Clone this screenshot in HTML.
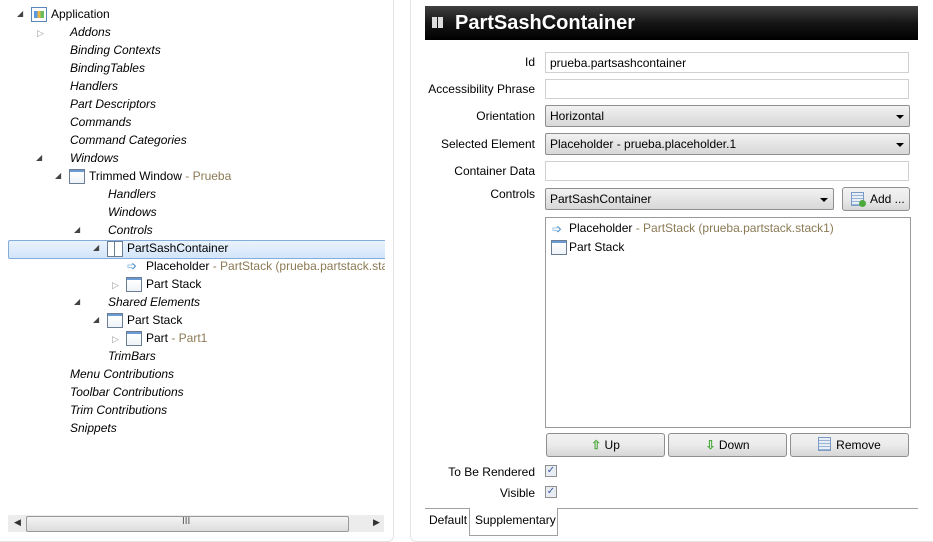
<!DOCTYPE html>
<html><head><style>
body{margin:0;width:933px;height:535px;background:#fff;font-family:"Liberation Sans",sans-serif;font-size:12px;color:#000;position:relative;overflow:hidden}
.a{position:absolute;white-space:nowrap}
.r{position:absolute;height:18px;line-height:18px;white-space:nowrap}
i{font-style:italic}
.g{color:#8c7a55}
.tri{position:absolute;font-size:8px;color:#444}
.tro{position:absolute;font-size:9px;color:#999}
.ic{position:absolute;width:14px;height:13px;border:1px solid #6a7d93;background:linear-gradient(#6a9bd4 0,#6a9bd4 2px,#fff 2px,#eef3f8)}
.lab{position:absolute;right:398px;text-align:right;white-space:nowrap}
.inp{position:absolute;left:545px;width:364px;height:20px;border:1px solid #d0d0d0;background:#fff;line-height:20px;padding-left:4px;box-sizing:border-box}
.cmb{position:absolute;left:545px;height:22px;border:1px solid #8e8f8f;border-radius:2px;background:linear-gradient(#f2f2f2,#e4e4e4 50%,#d8d8d8);line-height:20px;padding-left:4px;box-sizing:border-box}
.cmb:after{content:"";position:absolute;right:5px;top:9px;border:4px solid transparent;border-top:4px solid #000;border-bottom:0}
.btn{position:absolute;height:24px;border:1px solid #8e8f8f;border-radius:3px;background:linear-gradient(#f2f2f2,#ebebeb 50%,#d6d6d6);box-sizing:border-box;text-align:center;line-height:22px}
.cb{position:absolute;left:545px;width:12px;height:12px;border:1px solid #8e8f8f;background:#e8ecf3;box-sizing:border-box;font-size:10px;line-height:10px;text-align:center;color:#3b5a9a}
#tree{position:absolute;left:0;top:0;width:385px;height:510px;overflow:hidden}
</style></head><body>
<div class="a" style="left:-5px;top:-5px;width:397px;height:545px;border:1px solid #e4e4e4;border-radius:6px"></div>
<div class="a" style="left:410px;top:-5px;width:530px;height:545px;border:1px solid #e4e4e4;border-radius:6px"></div>

<div id="tree">
<div class="a" style="left:8px;top:240px;width:378px;height:17px;border:1px solid #84acdd;border-radius:2px;background:linear-gradient(#eaf3fd,#d3e5fa)"></div>

<span class="tri" style="left:17px;top:9px">◢</span>
<div class="a" style="left:31px;top:7px;width:14px;height:13px;border:1px solid #5b86b8;background:#fff"><div style="margin:3px 2px;height:7px;background:linear-gradient(90deg,#5a9be0 33%,#e6b64a 33%,#e6b64a 66%,#6bbf5a 66%)"></div></div>
<div class="r" style="left:51px;top:5px">Application</div>
<span class="tro" style="left:37px;top:28px">▷</span>
<div class="r" style="left:70px;top:23px"><i>Addons</i></div>
<div class="r" style="left:70px;top:41px"><i>Binding Contexts</i></div>
<div class="r" style="left:70px;top:59px"><i>BindingTables</i></div>
<div class="r" style="left:70px;top:77px"><i>Handlers</i></div>
<div class="r" style="left:70px;top:95px"><i>Part Descriptors</i></div>
<div class="r" style="left:70px;top:113px"><i>Commands</i></div>
<div class="r" style="left:70px;top:131px"><i>Command Categories</i></div>
<span class="tri" style="left:36px;top:153px">◢</span>
<div class="r" style="left:70px;top:149px"><i>Windows</i></div>
<span class="tri" style="left:55px;top:171px">◢</span>
<div class="ic" style="left:69px;top:169px"></div>
<div class="r" style="left:89px;top:167px">Trimmed Window <span class="g">- Prueba</span></div>
<div class="r" style="left:108px;top:185px"><i>Handlers</i></div>
<div class="r" style="left:108px;top:203px"><i>Windows</i></div>
<span class="tri" style="left:74px;top:225px">◢</span>
<div class="r" style="left:108px;top:221px"><i>Controls</i></div>
<span class="tri" style="left:93px;top:243px">◢</span>
<div class="a" style="left:107px;top:241px;width:14px;height:14px;border:1px solid #6a7d93;background:linear-gradient(90deg,#fff 6px,#6a7d93 6px,#6a7d93 7px,#fff 7px)"></div>
<div class="r" style="left:127px;top:239px">PartSashContainer</div>
<span class="a" style="left:127px;top:259px;color:#4a8fc8;font-size:12px">➩</span>
<div class="r" style="left:146px;top:257px">Placeholder <span class="g">- PartStack (prueba.partstack.stack1)</span></div>
<span class="tro" style="left:112px;top:280px">▷</span>
<div class="ic" style="left:126px;top:277px"></div>
<div class="r" style="left:146px;top:275px">Part Stack</div>
<span class="tri" style="left:74px;top:297px">◢</span>
<div class="r" style="left:108px;top:293px"><i>Shared Elements</i></div>
<span class="tri" style="left:93px;top:315px">◢</span>
<div class="ic" style="left:107px;top:313px"></div>
<div class="r" style="left:127px;top:311px">Part Stack</div>
<span class="tro" style="left:112px;top:334px">▷</span>
<div class="ic" style="left:126px;top:331px"></div>
<div class="r" style="left:146px;top:329px">Part <span class="g">- Part1</span></div>
<div class="r" style="left:108px;top:347px"><i>TrimBars</i></div>
<div class="r" style="left:70px;top:365px"><i>Menu Contributions</i></div>
<div class="r" style="left:70px;top:383px"><i>Toolbar Contributions</i></div>
<div class="r" style="left:70px;top:401px"><i>Trim Contributions</i></div>
<div class="r" style="left:70px;top:419px"><i>Snippets</i></div>
</div>

<div class="a" style="left:8px;top:515px;width:376px;height:17px;background:#ececec"></div>
<span class="a" style="left:14px;top:517px;font-size:9px;color:#333">◀</span>
<span class="a" style="left:373px;top:517px;font-size:9px;color:#333">▶</span>
<div class="a" style="left:26px;top:516px;width:321px;height:14px;border:1px solid #999;border-radius:2px;background:linear-gradient(#f4f4f4,#dcdcdc)"></div>
<span class="a" style="left:182px;top:516px;font-size:10px;color:#555">III</span>

<div class="a" style="left:425px;top:6px;width:493px;height:34px;background:linear-gradient(#404040,#151515 50%,#000)"></div>
<div class="a" style="left:432px;top:17px;width:5px;height:11px;background:#ddd"></div>
<div class="a" style="left:438px;top:17px;width:5px;height:11px;background:#ddd"></div>
<div class="a" style="left:455px;top:9px;color:#fff;font-size:20px;font-weight:bold;line-height:28px">PartSashContainer</div>

<div class="lab" style="top:55px">Id</div>
<div class="inp" style="top:52px;height:21px">prueba.partsashcontainer</div>
<div class="lab" style="top:82px">Accessibility Phrase</div>
<div class="inp" style="top:79px">&nbsp;</div>
<div class="lab" style="top:109px">Orientation</div>
<div class="cmb" style="top:105px;width:365px">Horizontal</div>
<div class="lab" style="top:137px">Selected Element</div>
<div class="cmb" style="top:133px;width:365px">Placeholder - prueba.placeholder.1</div>
<div class="lab" style="top:164px">Container Data</div>
<div class="inp" style="top:161px">&nbsp;</div>
<div class="lab" style="top:187px">Controls</div>
<div class="cmb" style="top:188px;width:289px">PartSashContainer</div>
<div class="btn" style="left:842px;top:187px;width:68px;text-align:left;padding-left:27px">Add ...</div>
<div class="a" style="left:851px;top:192px;width:11px;height:12px;border:1px solid #7a9bc5;background:repeating-linear-gradient(#e8eef6 0 2px,#9ab4d6 2px 3px)"></div>
<div class="a" style="left:859px;top:200px;width:7px;height:7px;border-radius:50%;background:#4caa3c"></div>

<div class="a" style="left:545px;top:217px;width:364px;height:209px;border:1px solid #9a9a9a;background:#fff"></div>
<span class="a" style="left:552px;top:222px;color:#4a8fc8">➩</span>
<div class="r" style="left:569px;top:219px">Placeholder <span class="g">- PartStack (prueba.partstack.stack1)</span></div>
<div class="ic" style="left:551px;top:240px"></div>
<div class="r" style="left:569px;top:238px">Part Stack</div>

<div class="btn" style="left:546px;top:433px;width:119px"><span style="color:#4caa3c;font-weight:bold">⇧</span> Up</div>
<div class="btn" style="left:668px;top:433px;width:119px"><span style="color:#4caa3c;font-weight:bold">⇩</span> Down</div>
<div class="btn" style="left:790px;top:433px;width:119px"><span style="display:inline-block;width:11px;height:12px;border:1px solid #7a9bc5;background:repeating-linear-gradient(#e8eef6 0 2px,#9ab4d6 2px 3px);vertical-align:-2px;margin-right:5px"></span>Remove</div>

<div class="lab" style="top:465px">To Be Rendered</div>
<div class="cb" style="top:465px">✓</div>
<div class="lab" style="top:486px">Visible</div>
<div class="cb" style="top:486px">✓</div>

<div class="a" style="left:425px;top:508px;width:493px;height:1px;background:#a0a0a0"></div>
<div class="a" style="left:429px;top:513px">Default</div>
<div class="a" style="left:469px;top:508px;width:87px;height:27px;border:1px solid #a0a0a0;border-top:none;background:#fff"></div>
<div class="a" style="left:475px;top:513px">Supplementary</div>
</body></html>
